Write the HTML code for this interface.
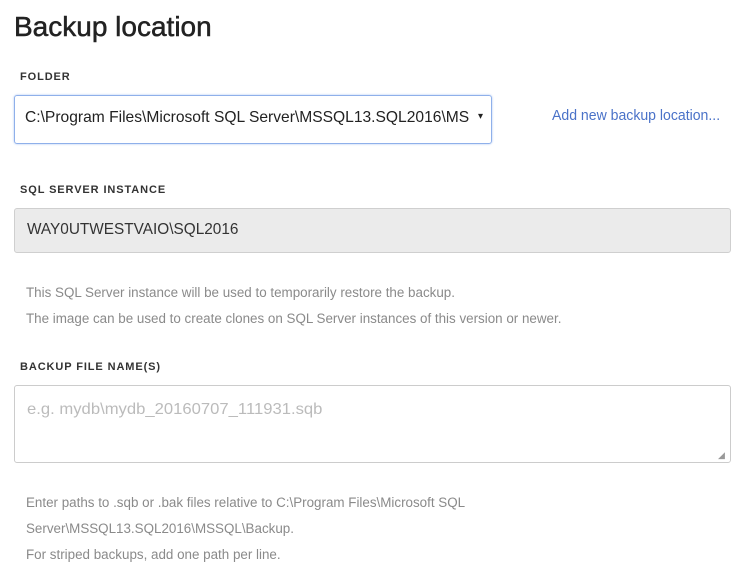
<!DOCTYPE html><html><head><style>
body{margin:0;width:736px;height:567px;background:#fff;font-family:"Liberation Sans",sans-serif;position:relative;overflow:hidden;color:#333}
.a{position:absolute;white-space:nowrap}
.t{left:14px;top:11px;font-size:28px;color:#222;-webkit-text-stroke:0.5px #222}
.l{left:20px;font-size:11px;font-weight:bold;letter-spacing:0.9px;color:#333}
.box{position:absolute;left:14px;box-sizing:border-box;border-radius:3px}
.c{transform-origin:left}
.h{left:26px;font-size:13.4px;color:#8a8a8a}
</style></head><body>
<div class="a t">Backup location</div>
<div class="a l" style="top:71px">FOLDER</div>
<div class="box" style="top:95px;width:478px;height:49px;border:1px solid #8fb0ea;box-shadow:0 0 2px #aac4f2"></div>
<div class="a c" style="left:25px;top:109px;font-size:16px;color:#222;transform:scaleX(.975)">C:\Program Files\Microsoft SQL Server\MSSQL13.SQL2016\MS</div>
<div class="a" style="left:478px;top:111px;font-size:10px;color:#222">▾</div>
<div class="a c" style="left:552px;top:108px;font-size:14.5px;color:#4a72c8;transform:scaleX(.97)">Add new backup location...</div>
<div class="a l" style="top:184px">SQL SERVER INSTANCE</div>
<div class="box" style="top:208px;width:717px;height:45px;background:#ebebeb;border:1px solid #cfcfcf"></div>
<div class="a c" style="left:27px;top:221px;font-size:16px;color:#333;transform:scaleX(.96)">WAY0UTWESTVAIO\SQL2016</div>
<div class="a h" style="top:285px">This SQL Server instance will be used to temporarily restore the backup.</div>
<div class="a h" style="top:311px">The image can be used to create clones on SQL Server instances of this version or newer.</div>
<div class="a l" style="top:361px">BACKUP FILE NAME(S)</div>
<div class="box" style="top:385px;width:717px;height:78px;border:1px solid #ccc"></div>
<div class="a c" style="left:27px;top:401px;font-size:16px;color:#bbb;transform:scaleX(1.04)">e.g. mydb\mydb_20160707_111931.sqb</div>
<div class="a" style="left:718px;top:450px;font-size:9px;color:#999">◢</div>
<div class="a h" style="top:495px">Enter paths to .sqb or .bak files relative to C:\Program Files\Microsoft SQL</div>
<div class="a h" style="top:521px">Server\MSSQL13.SQL2016\MSSQL\Backup.</div>
<div class="a h" style="top:547px">For striped backups, add one path per line.</div>
</body></html>
